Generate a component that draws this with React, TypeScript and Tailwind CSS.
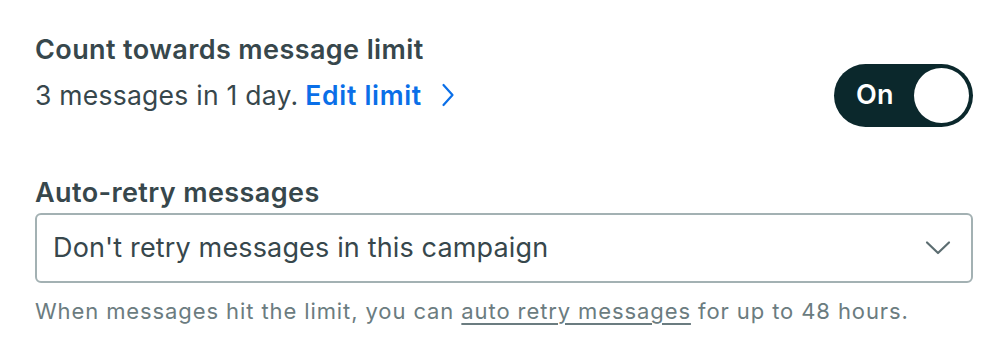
import React from "react";

export default function App() {
  return (
    <div className="w-[986px] h-[342px] bg-white pl-[35px] pr-[13px] pt-[34px]" style={{ fontFamily: "Inter, 'Noto Sans', sans-serif" }}>
      <div className="flex items-start justify-between">
        <div className="flex flex-col">
          <div className="text-[27px] leading-8 font-semibold text-[#37474c] tracking-[0.4px]">Count towards message limit</div>
          <div className="mt-[13px] flex items-center text-[26.5px] leading-8 text-[#37474c]">
            <span className="tracking-[0.25px]">3 messages in 1 day.</span>
            <span className="ml-[7px] font-semibold text-[#0a6fe8] tracking-[0.7px]">Edit limit</span>
            <svg className="ml-[19px]" width="14" height="24" viewBox="0 0 14 24" fill="none">
              <path d="M2.5 2 L11.5 12 L2.5 22" stroke="#0a6fe8" strokeWidth="2.2" strokeLinecap="round" strokeLinejoin="round" />
            </svg>
          </div>
        </div>
        <div className="mt-[30px] flex h-[63px] w-[139px] items-center justify-between rounded-full bg-[#0b282c] pl-[22px] pr-[4px]">
          <span className="text-[27px] font-semibold text-white tracking-[0.3px]">On</span>
          <div className="h-[55px] w-[55px] rounded-full bg-white" />
        </div>
      </div>
      <div className="mt-[50px] text-[27px] leading-8 font-semibold text-[#37474c] tracking-[0.4px]">Auto-retry messages</div>
      <div className="mt-[4px] flex h-[70px] w-[938px] items-center justify-between rounded-[6px] border-2 border-[#a3b1b3] pl-[16px] pr-[20px]">
        <span className="text-[27px] text-[#37474c] tracking-[0.15px]">Don't retry messages in this campaign</span>
        <svg width="26" height="16" viewBox="0 0 26 16" fill="none">
          <path d="M2 2.5 L13 13 L24 2.5" stroke="#5c6d71" strokeWidth="2.2" strokeLinecap="round" strokeLinejoin="round" />
        </svg>
      </div>
      <div className="mt-[14px] text-[22px] leading-7 text-[#6b7c80] tracking-[0.9px]">
        When messages hit the limit, you can <span className="underline underline-offset-4">auto retry messages</span> for up to 48 hours.
      </div>
    </div>
  );
}
